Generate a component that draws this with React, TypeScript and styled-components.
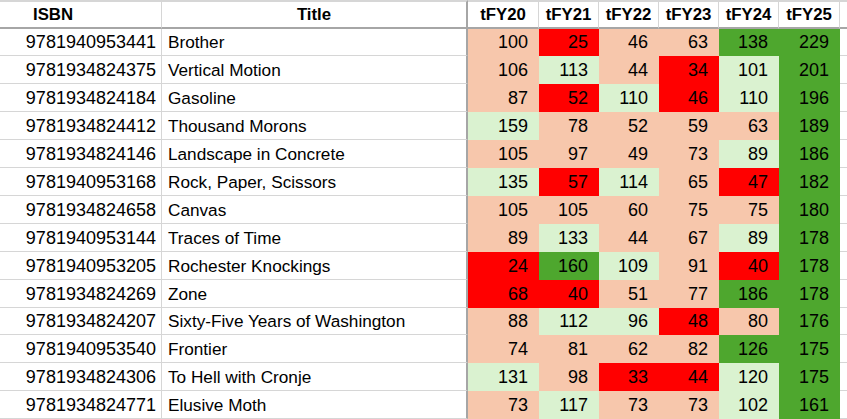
import styled, { createGlobalStyle } from "styled-components";

const GlobalStyle = createGlobalStyle`
    html, body {
        margin: 0;
        padding: 0;
        background: #ffffff;
        overflow: hidden;
    }
    body {
        font-family: "Liberation Sans", Arial, sans-serif;
        color: #000000;
    }
`;

const GRID = "#d6d6d6";
const FROZEN = "#a6a6a6";

const fills = {
    S: "#f7c7ac",
    R: "#ff0000",
    L: "#daf2d0",
    G: "#4ea72e",
    W: "#ffffff",
};

type Fill = keyof typeof fills;

const Sheet = styled.div`
    display: grid;
    grid-template-columns: 162px 306px 71px 60px 60px 60px 60px 61px 1fr;
    grid-template-rows: 28.6px repeat(14, 27.9px);
    width: 847px;
    height: 419px;
    overflow: hidden;
`;

const HeaderCell = styled.div<{ $frozen?: boolean; $pad?: number }>`
    box-sizing: border-box;
    display: flex;
    align-items: flex-end;
    justify-content: ${(p) => (p.$pad ? "flex-start" : "center")};
    padding-left: ${(p) => p.$pad || 0}px;
    padding-bottom: 2px;
    border-top: 2px solid ${GRID};
    border-bottom: 2px solid ${FROZEN};
    border-right: ${(p) => (p.$frozen ? `2px solid ${FROZEN}` : `1.5px solid ${GRID}`)};
    font-weight: bold;
    font-size: 16.8px;
    white-space: nowrap;
`;

const Cell = styled.div<{ $fill?: Fill; $left?: boolean; $frozen?: boolean; $pr?: number }>`
    box-sizing: border-box;
    display: flex;
    align-items: flex-end;
    justify-content: ${(p) => (p.$left ? "flex-start" : "flex-end")};
    padding: 0 ${(p) => p.$pr ?? 10}px 2px ${(p) => (p.$left ? 6 : 0)}px;
    background: ${(p) => fills[p.$fill || "W"]};
    border-bottom: 1.5px solid ${(p) => (p.$fill && p.$fill !== "W" ? fills[p.$fill] : GRID)};
    border-right: ${(p) =>
        p.$frozen
            ? `2px solid ${FROZEN}`
            : `1.5px solid ${p.$fill && p.$fill !== "W" ? fills[p.$fill] : GRID}`};
    font-size: ${(p) => (p.$left ? 17.2 : 18)}px;
    white-space: nowrap;
    overflow: hidden;
`;

interface Book {
    isbn: string;
    title: string;
    values: [number, Fill][];
}

const books: Book[] = [
    { isbn: "9781940953441", title: "Brother", values: [[100, "S"], [25, "R"], [46, "S"], [63, "S"], [138, "G"], [229, "G"]] },
    { isbn: "9781934824375", title: "Vertical Motion", values: [[106, "S"], [113, "L"], [44, "S"], [34, "R"], [101, "L"], [201, "G"]] },
    { isbn: "9781934824184", title: "Gasoline", values: [[87, "S"], [52, "R"], [110, "L"], [46, "R"], [110, "L"], [196, "G"]] },
    { isbn: "9781934824412", title: "Thousand Morons", values: [[159, "L"], [78, "S"], [52, "S"], [59, "S"], [63, "S"], [189, "G"]] },
    { isbn: "9781934824146", title: "Landscape in Concrete", values: [[105, "S"], [97, "S"], [49, "S"], [73, "S"], [89, "L"], [186, "G"]] },
    { isbn: "9781940953168", title: "Rock, Paper, Scissors", values: [[135, "L"], [57, "R"], [114, "L"], [65, "S"], [47, "R"], [182, "G"]] },
    { isbn: "9781934824658", title: "Canvas", values: [[105, "S"], [105, "S"], [60, "S"], [75, "S"], [75, "S"], [180, "G"]] },
    { isbn: "9781940953144", title: "Traces of Time", values: [[89, "S"], [133, "L"], [44, "S"], [67, "S"], [89, "L"], [178, "G"]] },
    { isbn: "9781940953205", title: "Rochester Knockings", values: [[24, "R"], [160, "G"], [109, "L"], [91, "S"], [40, "R"], [178, "G"]] },
    { isbn: "9781934824269", title: "Zone", values: [[68, "R"], [40, "R"], [51, "S"], [77, "S"], [186, "G"], [178, "G"]] },
    { isbn: "9781934824207", title: "Sixty-Five Years of Washington", values: [[88, "S"], [112, "L"], [96, "L"], [48, "R"], [80, "S"], [176, "G"]] },
    { isbn: "9781940953540", title: "Frontier", values: [[74, "S"], [81, "S"], [62, "S"], [82, "S"], [126, "G"], [175, "G"]] },
    { isbn: "9781934824306", title: "To Hell with Cronje", values: [[131, "L"], [98, "S"], [33, "R"], [44, "R"], [120, "L"], [175, "G"]] },
    { isbn: "9781934824771", title: "Elusive Moth", values: [[73, "S"], [117, "L"], [73, "S"], [73, "S"], [102, "L"], [161, "G"]] },
];

const years = ["tFY20", "tFY21", "tFY22", "tFY23", "tFY24", "tFY25"];

function App() {
    return (
        <>
            <GlobalStyle />
            <Sheet>
                <HeaderCell $pad={33}>ISBN</HeaderCell>
                <HeaderCell $frozen>Title</HeaderCell>
                {years.map((y) => (
                    <HeaderCell key={y}>{y}</HeaderCell>
                ))}
                <HeaderCell />
                {books.map((b) => (
                    <>
                        <Cell key={b.isbn} $pr={5}>{b.isbn}</Cell>
                        <Cell $left $frozen>{b.title}</Cell>
                        {b.values.map(([v, f], i) => (
                            <Cell key={i} $fill={f}>{v}</Cell>
                        ))}
                        <Cell />
                    </>
                ))}
            </Sheet>
        </>
    );
}

export default App;
